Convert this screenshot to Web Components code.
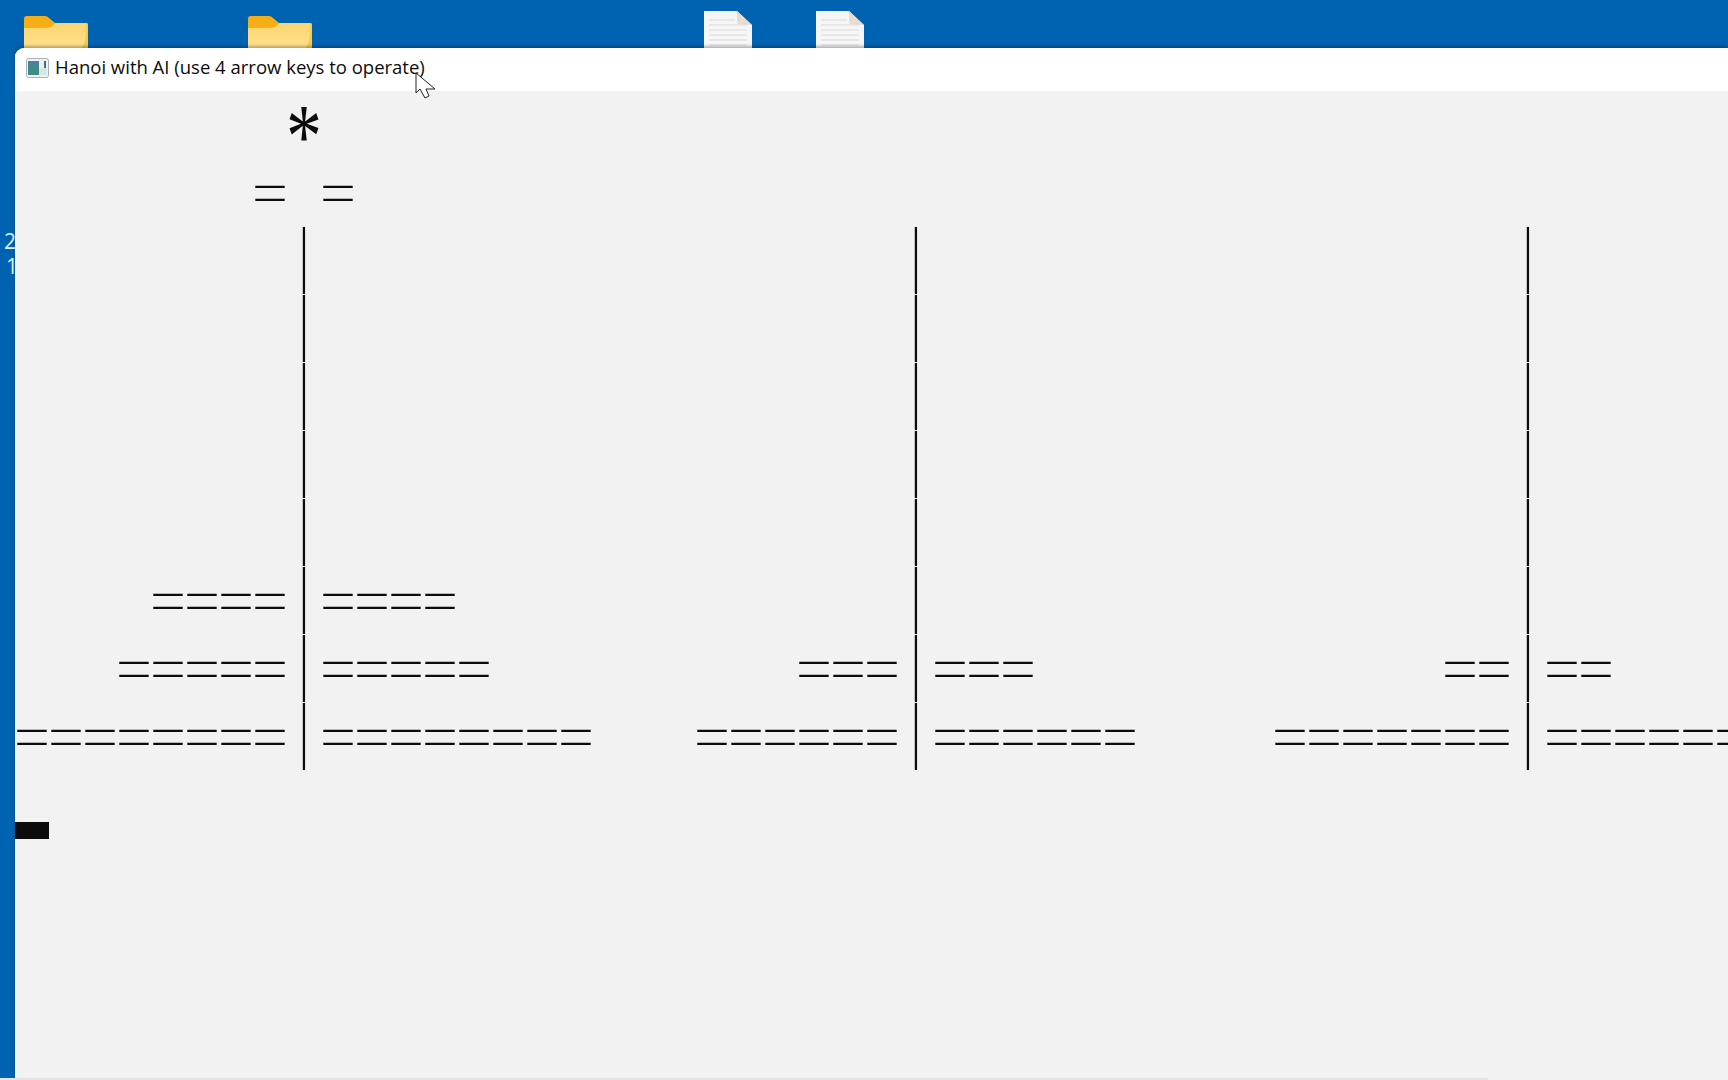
<!DOCTYPE html>
<html lang="en">
<head>
<meta charset="utf-8">
<title>Hanoi with AI</title>
<style>
  html, body { margin: 0; height: 100%; background: #0063b1; overflow: hidden; }
</style>
</head>
<body>
<win-desktop>
  <desktop-icon kind="folder" style="left:24px;top:16px"></desktop-icon>
  <desktop-icon kind="folder" style="left:248px;top:16px"></desktop-icon>
  <desktop-icon kind="file" style="left:704px;top:11px"></desktop-icon>
  <desktop-icon kind="file" style="left:816px;top:11px"></desktop-icon>
  <console-window title="Hanoi with AI (use 4 arrow keys to operate)">
    <hanoi-board></hanoi-board>
  </console-window>
  <mouse-pointer></mouse-pointer>
</win-desktop>

<script>
class WinDesktop extends HTMLElement {
  constructor() {
    super();
    this.attachShadow({ mode: 'open' });
    this.shadowRoot.innerHTML = `
      <style>
        :host { display: block; position: relative; width: 1728px; height: 1080px; overflow: hidden; background: #0063b1; }
        .date { position: absolute; left: 0; top: 229px; width: 15px; overflow: hidden; color: #dfeefa;
          font: 21px/25px "Open Sans", sans-serif; }
        .date div:first-child { padding-left: 4px; }
        .date div:last-child { padding-left: 6px; }
        .edge { position: absolute; left: 0; bottom: 0; width: 1488px; height: 2px; background: #e4e4e4; }
      </style>
      <div class="date"><div>2</div><div>1</div></div>
      <slot></slot>
      <div class="edge"></div>`;
  }
}
customElements.define('win-desktop', WinDesktop);

class DesktopIcon extends HTMLElement {
  constructor() {
    super();
    this.attachShadow({ mode: 'open' });
  }
  connectedCallback() {
    const folder = `
      <svg width="64" height="32" viewBox="0 0 64 32">
        <defs><linearGradient id="f" x1="0" y1="0" x2="0" y2="1">
          <stop offset="0" stop-color="#fdd56c"/><stop offset="1" stop-color="#fde08f"/>
        </linearGradient></defs>
        <path d="M0 9q0-2 2-2h60q2 0 2 2v23H0z" fill="url(#f)"/>
        <path d="M64 9v23H58q5-8 4-25q2 0 2 2z" fill="#fac94a"/>
        <path d="M3 0h18q2 0 4 2l6 5q-3 5-8 5H0V3q0-3 3-3z" fill="#f6ae17"/>
      </svg>`;
    const file = `
      <svg width="48" height="37" viewBox="0 0 48 37">
        <path d="M0 0h33l15 14v23H0z" fill="#f6f6f6"/>
        <path d="M33 0l15 14H37q-4 0-4-4z" fill="#e8dcd2"/>
        <path d="M5 9h26M5 14h38M5 19h38M5 24h38M5 29h38M5 34h38" stroke="#e4e4e4" stroke-width="1.4"/>
      </svg>`;
    this.shadowRoot.innerHTML = `
      <style>:host { position: absolute; display: block; line-height: 0; }</style>
      ${this.getAttribute('kind') === 'folder' ? folder : file}`;
  }
}
customElements.define('desktop-icon', DesktopIcon);

class ConsoleWindow extends HTMLElement {
  constructor() {
    super();
    this.attachShadow({ mode: 'open' });
  }
  connectedCallback() {
    const title = this.getAttribute('title') || '';
    this.shadowRoot.innerHTML = `
      <style>
        :host { position: absolute; left: 15px; top: 48px; width: 1713px; height: 1032px; display: flex; flex-direction: column;
          background: #f2f2f2; border-top-left-radius: 9px; box-shadow: 0 -2px 3px rgba(0,0,0,.28); }
        header { flex: none; height: 43px; box-sizing: border-box; padding: 0 0 4px 11px; background: #fff;
          border-top-left-radius: 9px; display: flex; align-items: center; gap: 6px; }
        h1 { margin: 0; font: 400 18.5px/1 "Open Sans", "Noto Sans", sans-serif; color: #0c0c0c; white-space: pre; }
        svg { flex: none; }
        main { flex: 1; min-height: 0; overflow: hidden; }
      </style>
      <header>
        <svg width="23" height="20" viewBox="0 0 23 20">
          <rect x=".5" y=".5" width="22" height="19" rx="2" fill="#eef1f1" stroke="#a9b2b6"/>
          <rect x="2" y="3" width="11" height="14" fill="#3f8a86"/>
          <rect x="2" y="3" width="11" height="5" fill="#4f7f9a"/>
          <rect x="13" y="10" width="8" height="7" fill="#d8e6e2"/>
          <rect x="18" y="3" width="2" height="7" fill="#3c6f80"/>
        </svg>
        <h1>${title}</h1>
      </header>
      <main><slot></slot></main>`;
  }
}
customElements.define('console-window', ConsoleWindow);

class HanoiBoard extends HTMLElement {
  constructor() {
    super();
    this.attachShadow({ mode: 'open' });
  }
  connectedCallback() {
    // every row is a 34px character grid, same as the console it copies
    const disc = (at, n) => `<span class="eq" style="grid-column:${at + 1}/span ${n}">${'='.repeat(n)}</span>`;
    const pole = at => `<span class="pole" style="grid-column:${at + 1}">|</span>`;
    const pegs = [8, 26, 44];
    const stack = [
      [[], [], []],
      [[], [], []],
      [[], [], []],
      [[], [], []],
      [[], [], []],
      [[4], [], []],
      [[5], [3], [2]],
      [[8], [6], [7]]
    ];
    const rows = stack.map(row => row.map((d, i) => {
      if (!d.length) return pole(pegs[i]);
      return disc(pegs[i] - d[0], d[0]) + pole(pegs[i]) + disc(pegs[i] + 1, d[0]);
    }).join(''));
    rows.unshift(disc(7, 1) + disc(9, 1));
    rows.unshift('<span class="star" style="grid-column:9">*</span>');
    this.shadowRoot.innerHTML = `
      <style>
        :host { display: block; overflow: hidden; color: #0c0c0c; }
        .row { display: grid; grid-template-columns: repeat(51, 34px); height: 68px; }
        span { display: block; white-space: pre; }
        .eq { font: 240 64px/66px "Noto Sans", sans-serif; letter-spacing: -2.48px; margin-left: -1.2px; }
        .pole { display: flex; justify-content: center; font: 165 56px/68px Inter, sans-serif; }
        .star { display: flex; justify-content: center; font: 400 92px/90.6px "Liberation Serif", serif; transform: scaleX(.78); }
        .caret { width: 34px; height: 17px; margin-top: 51px; background: #0c0c0c; }
      </style>
      ${rows.map(r => `<div class="row">${r}</div>`).join('')}
      <span class="caret"></span>`;
  }
}
customElements.define('hanoi-board', HanoiBoard);

class MousePointer extends HTMLElement {
  constructor() {
    super();
    this.attachShadow({ mode: 'open' });
    this.shadowRoot.innerHTML = `
      <style>:host { position: absolute; left: 415px; top: 72px; display: block; line-height: 0; }</style>
      <svg width="22" height="28" viewBox="0 0 22 28">
        <path d="M1 1V21L5 17L10 26L14 24L11 17H20Z" fill="#fff" stroke="#222" stroke-width="1"/>
      </svg>`;
  }
}
customElements.define('mouse-pointer', MousePointer);
</script>
</body>
</html>
